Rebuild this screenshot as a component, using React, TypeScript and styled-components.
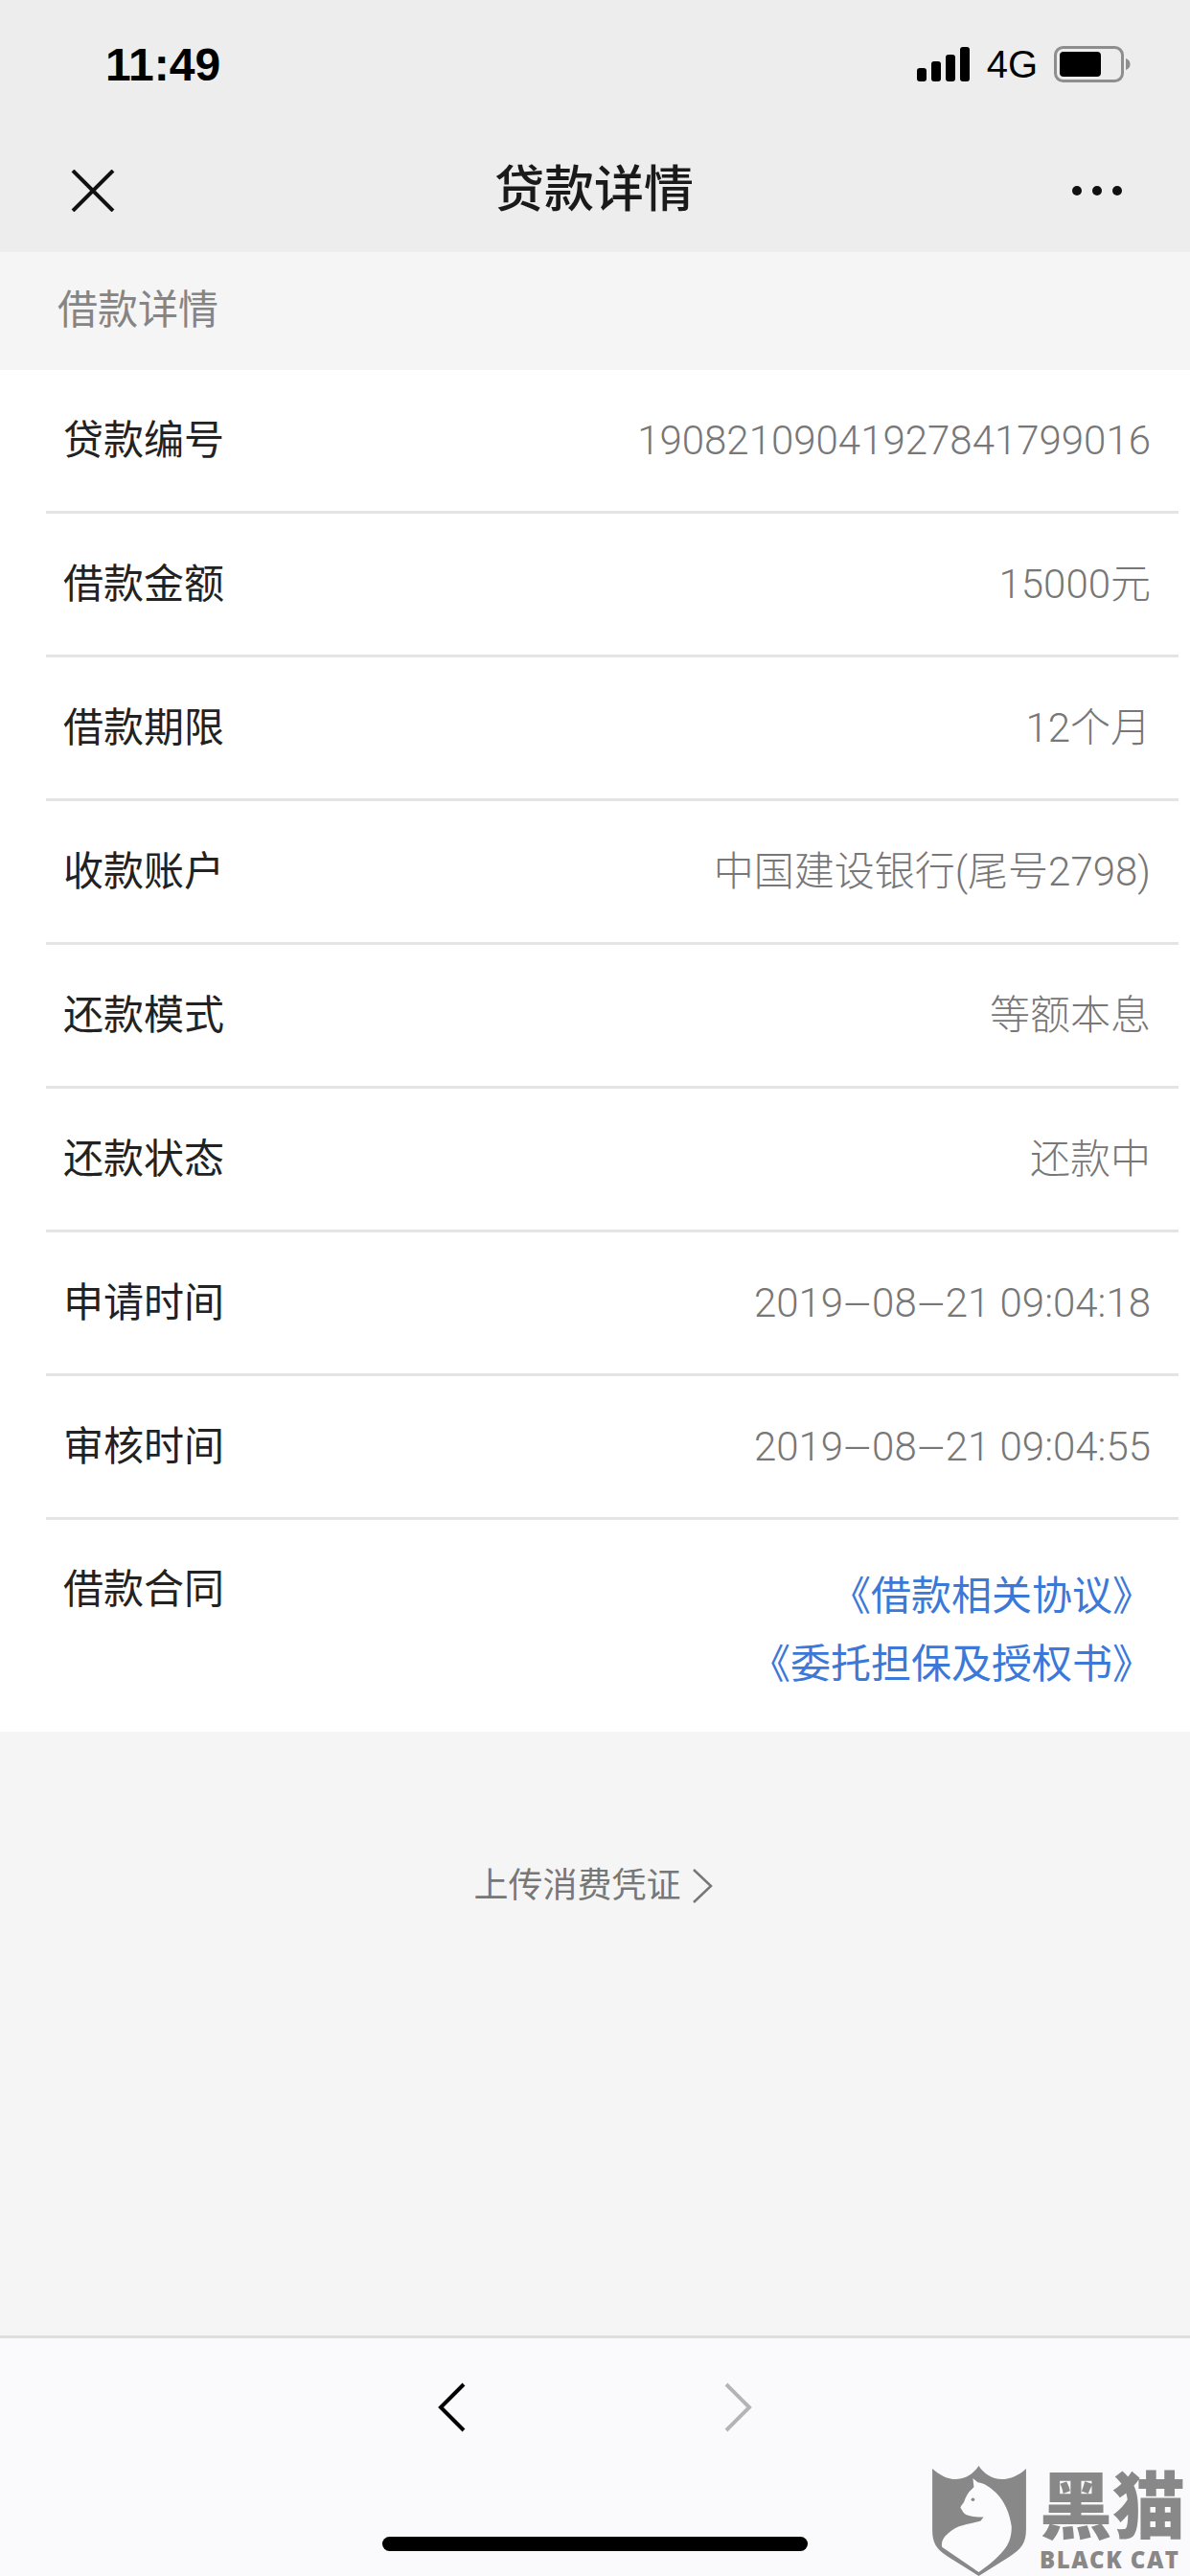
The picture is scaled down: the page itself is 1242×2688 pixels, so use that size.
import React from "react";
import styled, { createGlobalStyle } from "styled-components";

const CJK = `"Roboto", "Noto Sans CJK SC", sans-serif`;

const rows = [
  { label: "贷款编号", value: "19082109041927841799016" },
  { label: "借款金额", value: "15000元" },
  { label: "借款期限", value: "12个月" },
  { label: "收款账户", value: "中国建设银行(尾号2798)" },
  { label: "还款模式", value: "等额本息" },
  { label: "还款状态", value: "还款中" },
  { label: "申请时间", value: "2019-08-21 09:04:18" },
  { label: "审核时间", value: "2019-08-21 09:04:55" },
];

// the dates have a long hyphen in the screenshot
function renderValue(value: string) {
  return value.split("-").map((part, i) => (
    <React.Fragment key={i}>
      {i > 0 && <Dash>-</Dash>}
      {part}
    </React.Fragment>
  ));
}

const App: React.FC = () => {
  return (
    <Page>
      <GlobalStyle />
      <Header>
        <StatusBar>
          <Time>11:49</Time>
          <StatusIcons>
            <svg width="56" height="36" viewBox="0 0 56 36">
              <rect x="0" y="22" width="10" height="14" rx="3" fill="#000" />
              <rect x="15" y="15" width="10" height="21" rx="3" fill="#000" />
              <rect x="30" y="8" width="10" height="28" rx="3" fill="#000" />
              <rect x="45" y="0" width="10" height="36" rx="3" fill="#000" />
            </svg>
            <Network>4G</Network>
            <svg width="80" height="38" viewBox="0 0 80 38">
              <rect x="1.5" y="1.5" width="70" height="35" rx="8" fill="none" stroke="#8e8e8e" strokeWidth="3" />
              <rect x="6" y="6" width="43" height="26" rx="4" fill="#000" />
              <path d="M75 13c3 1 4.500 3 4.500 6s-1.500 5-4.500 6z" fill="#8e8e8e" />
            </svg>
          </StatusIcons>
        </StatusBar>
        <NavBar>
          <svg width="46" height="44" viewBox="0 0 46 44">
            <path d="M2 1l42 42M44 1L2 43" stroke="#111" strokeWidth="4" fill="none" />
          </svg>
          <Title>贷款详情</Title>
          <MoreDots>
            <svg width="54" height="12" viewBox="0 0 54 12">
              <circle cx="6" cy="6" r="5" fill="#111" />
              <circle cx="27" cy="6" r="5" fill="#111" />
              <circle cx="48" cy="6" r="5" fill="#111" />
            </svg>
          </MoreDots>
        </NavBar>
      </Header>

      <SectionLabel>借款详情</SectionLabel>

      <List>
        {rows.map((row) => (
          <Row key={row.label}>
            <Label>{row.label}</Label>
            <Value>{renderValue(row.value)}</Value>
          </Row>
        ))}
        <ContractRow>
          <Label>借款合同</Label>
          <Links>
            <ContractLink>《借款相关协议》</ContractLink>
            <ContractLink>《委托担保及授权书》</ContractLink>
          </Links>
        </ContractRow>
      </List>

      <Content>
        <Upload>
          上传消费凭证
          <svg width="24" height="38" viewBox="0 0 24 38">
            <path d="M3 2l18 17L3 36" stroke="#777" strokeWidth="2.500" fill="none" />
          </svg>
        </Upload>
      </Content>

      <Toolbar>
        <ToolbarButtons>
          <svg width="30" height="54" viewBox="0 0 30 54">
            <path d="M27 3L3 27l24 24" stroke="#000" strokeWidth="4" fill="none" />
          </svg>
          <svg width="30" height="54" viewBox="0 0 30 54">
            <path d="M3 3l24 24L3 51" stroke="#b4b4b4" strokeWidth="4" fill="none" />
          </svg>
        </ToolbarButtons>
        <HomeBar />
      </Toolbar>

      <Watermark>
        <svg width="98" height="115" viewBox="0 0 97 114">
          <path
            d="M0 3C8 10 16 14 24 14 34 14 43 8 48 0 53 8 62 14 72 14 80 14 90 10 97 3L97 66C97 80 92 86 80 94L48 114 16 94C4 86 0 80 0 66Z"
            fill="#888"
          />
          <path
            d="M42 13L47 17C54 18 60 22 66 28 74 36 80 48 82 63 82 72 80 78 77 83 71 92 60 102 48 110L10 84C9 79 11 76 13 73 18 68 22 65 27 63 34 60 44 59 50 57L53 53C48 53 44 53 40 52 36 51 33 50 32 48L29 43C30 41 32 39 33 37 34 33 36 30 38 27L43 22Z"
            fill="#fbfbfd"
          />
          <circle cx="42" cy="35" r="1.800" fill="#888" />
        </svg>
        <Brand>
          <BrandName>黑猫</BrandName>
          <BrandLatin>BLACK CAT</BrandLatin>
        </Brand>
      </Watermark>
    </Page>
  );
};

export default App;

const GlobalStyle = createGlobalStyle`
  html, body {
    margin: 0;
    padding: 0;
    background: #f5f5f5;
  }
  svg {
    display: block;
    flex-shrink: 0;
  }
`;

const Page = styled.div`
  position: relative;
  width: 1242px;
  height: 2688px;
  overflow: hidden;
  display: flex;
  flex-direction: column;
  font-family: ${CJK};
  background: #f5f5f5;
`;

const Header = styled.header`
  height: 263px;
  background: #ededed;
  display: flex;
  flex-direction: column;
`;

const StatusBar = styled.div`
  height: 134px;
  display: flex;
  align-items: center;
  justify-content: space-between;
  padding: 0 62px 0 110px;
  box-sizing: border-box;
`;

const Time = styled.span`
  font-family: "Liberation Sans", sans-serif;
  font-weight: 700;
  font-size: 48px;
  color: #000;
`;

const StatusIcons = styled.div`
  display: flex;
  align-items: center;
  gap: 17px;
`;

const Network = styled.span`
  font-family: "Liberation Sans", sans-serif;
  font-size: 40px;
  color: #000;
`;

const NavBar = styled.div`
  height: 129px;
  display: grid;
  grid-template-columns: 1fr auto 1fr;
  align-items: center;
  padding: 0 70px 0 74px;
`;

const Title = styled.h1`
  margin: 0;
  padding-right: 6px;
  font-size: 52px;
  line-height: 60px;
  font-weight: 500;
  color: #1a1a1a;
`;

const MoreDots = styled.div`
  justify-self: end;
`;

const SectionLabel = styled.div`
  height: 123px;
  box-sizing: border-box;
  display: flex;
  align-items: center;
  padding: 0 0 1px 60px;
  background: #f5f5f5;
  font-size: 42px;
  line-height: 60px;
  color: #858585;
`;

const List = styled.div`
  background: #fff;
  padding: 0 12px 0 48px;
`;

const Row = styled.div`
  height: 150px;
  box-sizing: border-box;
  display: flex;
  align-items: center;
  justify-content: space-between;
  padding: 0 29px 0 18px;
  border-bottom: 3px solid #e4e4e4;
`;

const ContractRow = styled.div`
  height: 221px;
  box-sizing: border-box;
  display: flex;
  align-items: flex-start;
  justify-content: space-between;
  padding: 43px 27px 0 18px;
`;

const Label = styled.span`
  font-size: 42px;
  line-height: 60px;
  color: #222;
`;

const Value = styled.span`
  font-size: 42px;
  line-height: 60px;
  font-weight: 300;
  color: #777;
`;

const Dash = styled.span`
  display: inline-block;
  margin: 0 9px;
  transform: scaleX(2.5);
`;

const Links = styled.div`
  display: flex;
  flex-direction: column;
  align-items: flex-end;
  gap: 11px;
  padding-top: 7px;
`;

const ContractLink = styled.a`
  font-size: 42px;
  line-height: 60px;
  color: #3b78d8;
`;

const Content = styled.main`
  flex: 1;
  display: flex;
  justify-content: center;
  align-items: flex-start;
  padding-top: 138px;
`;

const Upload = styled.div`
  display: flex;
  align-items: center;
  gap: 10px;
  margin-left: -3px;
  font-size: 36px;
  line-height: 46px;
  color: #777;
`;

const Toolbar = styled.footer`
  height: 251px;
  box-sizing: border-box;
  background: #fafafc;
  border-top: 3px solid #dedede;
  display: flex;
  flex-direction: column;
  align-items: center;
`;

const ToolbarButtons = styled.div`
  display: flex;
  gap: 268px;
  padding-top: 45px;
`;

const HomeBar = styled.div`
  width: 444px;
  height: 15px;
  margin-top: 108px;
  border-radius: 8px;
  background: #000;
`;

const Watermark = styled.div`
  position: absolute;
  left: 973px;
  top: 2573px;
  display: flex;
  gap: 14px;
`;

const Brand = styled.div`
  display: flex;
  flex-direction: column;
  gap: 6px;
  padding-top: 6px;
`;

const BrandName = styled.span`
  font-size: 76px;
  line-height: 76px;
  font-weight: 900;
  color: #888;
  white-space: nowrap;
`;

const BrandLatin = styled.span`
  font-family: "Open Sans", sans-serif;
  font-size: 24px;
  line-height: 20px;
  font-weight: 800;
  letter-spacing: 1.500px;
  color: #888;
  white-space: nowrap;
`;
